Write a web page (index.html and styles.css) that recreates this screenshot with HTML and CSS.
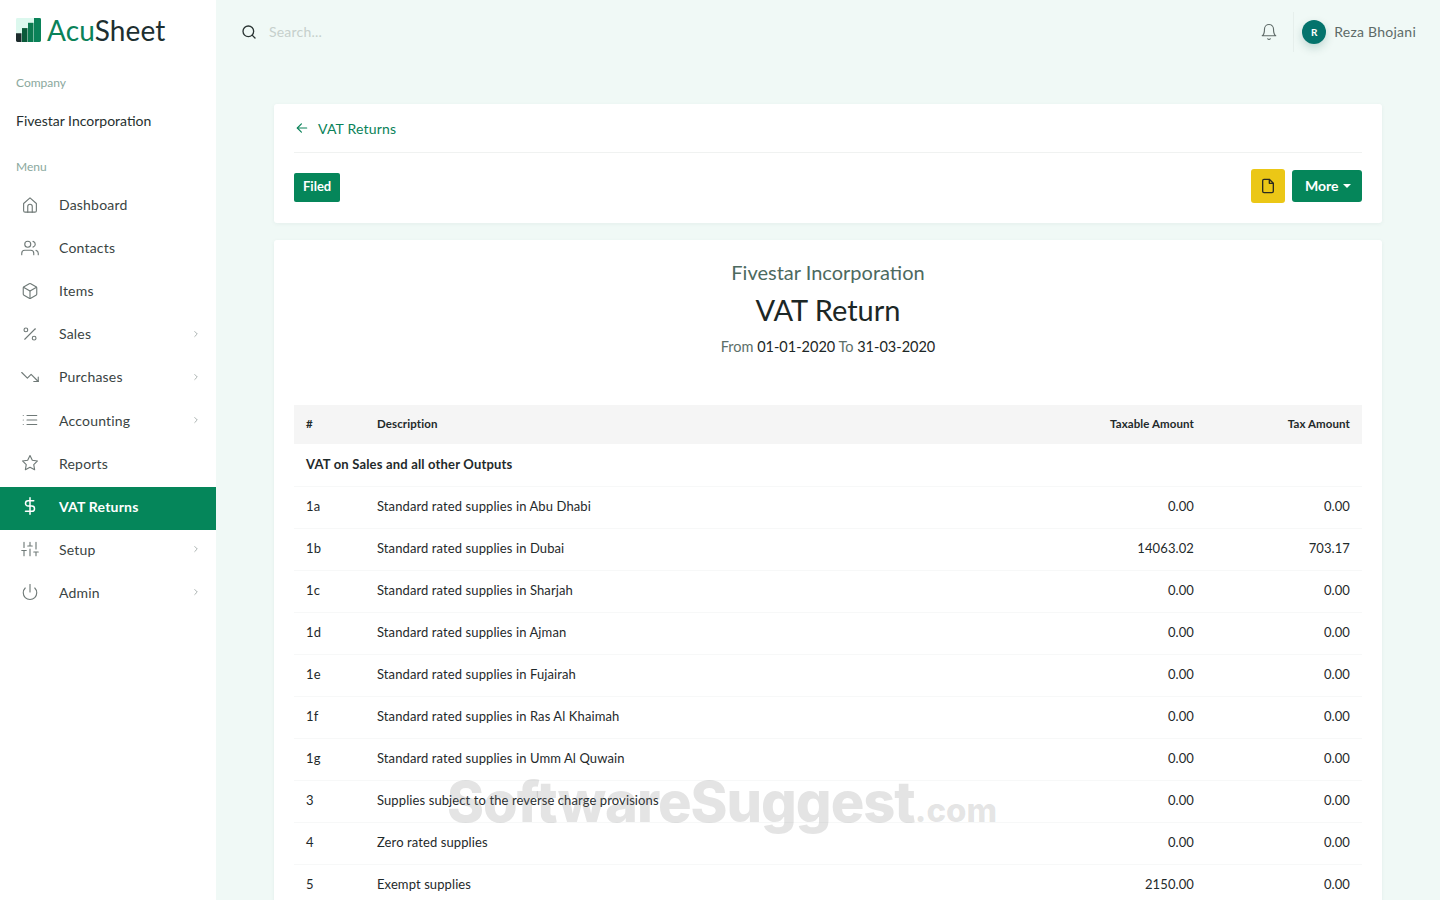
FILE: index.html
```html
<!DOCTYPE html>
<html lang="en">
<head>
    <meta charset="UTF-8">
    <meta name="viewport" content="width=device-width, initial-scale=1.0">
    <title>VAT Return</title>
    <link rel="stylesheet" href="styles.css">
</head>
<body>
    <aside class="sidebar">
        <div class="logo">
            <svg width="25" height="24" viewBox="0 0 25 25" preserveAspectRatio="none">
                <rect width="25" height="25" rx="1.5" fill="#dcf8ee"/>
                <path d="M0 16h5.500v9H1.500A1.500 1.500 0 0 1 0 23.500z" fill="#1d2b2c"/>
                <rect x="6" y="10.500" width="5.500" height="14.500" fill="#0a5a3a"/>
                <rect x="12" y="5" width="5.500" height="20" fill="#0b7a50"/>
                <path d="M18 0h5.500A1.500 1.500 0 0 1 25 1.500v22a1.500 1.500 0 0 1-1.500 1.500H18z" fill="#0a8259"/>
            </svg>
            <span class="logo-text"><span class="logo-acu">Acu</span>Sheet</span>
        </div>
        <div class="side-label">Company</div>
        <div class="company">Fivestar Incorporation</div>
        <div class="side-label side-label-menu">Menu</div>
        <nav class="menu">
            <a class="menu-item">
                <svg class="menu-icon" viewBox="0 0 24 24"><path d="M3.500 10L12 2.500l8.500 7.500v9.500a2 2 0 0 1-2 2h-13a2 2 0 0 1-2-2z"/><path d="M9 21.500V14a3 3 0 0 1 6 0v7.500"/></svg>
                <span class="menu-name">Dashboard</span>
            </a>
            <a class="menu-item">
                <svg class="menu-icon" viewBox="0 0 24 24"><path d="M17 21v-2a4 4 0 0 0-4-4H5a4 4 0 0 0-4 4v2"/><circle cx="9" cy="7" r="4"/><path d="M23 21v-2a4 4 0 0 0-3-3.870"/><path d="M16 3.130a4 4 0 0 1 0 7.750"/></svg>
                <span class="menu-name">Contacts</span>
            </a>
            <a class="menu-item">
                <svg class="menu-icon" viewBox="0 0 24 24"><path d="M21 16V8a2 2 0 0 0-1-1.730l-7-4a2 2 0 0 0-2 0l-7 4A2 2 0 0 0 3 8v8a2 2 0 0 0 1 1.730l7 4a2 2 0 0 0 2 0l7-4A2 2 0 0 0 21 16z"/><path d="M3.270 6.960L12 12.010l8.730-5.050"/><path d="M12 22.080V12"/></svg>
                <span class="menu-name">Items</span>
            </a>
            <a class="menu-item">
                <svg class="menu-icon" viewBox="0 0 24 24"><path d="M19 5L5 19"/><circle cx="6.500" cy="6.500" r="2.500"/><circle cx="17.500" cy="17.500" r="2.500"/></svg>
                <span class="menu-name">Sales</span>
                <svg class="chevron" viewBox="0 0 24 24"><path d="M9 18l6-6-6-6"/></svg>
            </a>
            <a class="menu-item">
                <svg class="menu-icon" viewBox="0 0 24 24"><path d="M23 18l-9.500-9.500-5 5L1 6"/><path d="M17 18h6v-6"/></svg>
                <span class="menu-name">Purchases</span>
                <svg class="chevron" viewBox="0 0 24 24"><path d="M9 18l6-6-6-6"/></svg>
            </a>
            <a class="menu-item">
                <svg class="menu-icon" viewBox="0 0 24 24"><path d="M8 6h13M8 12h13M8 18h13M3 6h.010M3 12h.010M3 18h.010"/></svg>
                <span class="menu-name">Accounting</span>
                <svg class="chevron" viewBox="0 0 24 24"><path d="M9 18l6-6-6-6"/></svg>
            </a>
            <a class="menu-item">
                <svg class="menu-icon" viewBox="0 0 24 24"><path d="M12 2l3.090 6.260L22 9.270l-5 4.870 1.180 6.880L12 17.770l-6.180 3.250L7 14.140 2 9.270l6.910-1.010z"/></svg>
                <span class="menu-name">Reports</span>
            </a>
            <a class="menu-item active">
                <svg class="menu-icon" viewBox="0 0 24 24"><path d="M12 1v22"/><path d="M17 5H9.500a3.500 3.500 0 0 0 0 7h5a3.500 3.500 0 0 1 0 7H6"/></svg>
                <span class="menu-name">VAT Returns</span>
            </a>
            <a class="menu-item">
                <svg class="menu-icon" viewBox="0 0 24 24"><path d="M4 21v-7M4 10V3M12 21v-9M12 8V3M20 21v-5M20 12V3M1 14h6M9 8h6M17 16h6"/></svg>
                <span class="menu-name">Setup</span>
                <svg class="chevron" viewBox="0 0 24 24"><path d="M9 18l6-6-6-6"/></svg>
            </a>
            <a class="menu-item">
                <svg class="menu-icon" viewBox="0 0 24 24"><path d="M18.360 6.640a9 9 0 1 1-12.730 0"/><path d="M12 2v10"/></svg>
                <span class="menu-name">Admin</span>
                <svg class="chevron" viewBox="0 0 24 24"><path d="M9 18l6-6-6-6"/></svg>
            </a>
        </nav>
    </aside>

    <div class="main">
        <header class="topbar">
            <svg class="search-icon" viewBox="0 0 24 24"><circle cx="11" cy="11" r="8"/><path d="M21 21l-4.350-4.350"/></svg>
            <span class="search-text">Search...</span>
            <svg class="bell" viewBox="0 0 24 24"><path d="M18 8a6 6 0 0 0-12 0c0 7-3 9-3 9h18s-3-2-3-9"/><path d="M13.730 21a2 2 0 0 1-3.460 0"/></svg>
            <div class="user">
                <span class="avatar">R</span>
                <span class="user-name">Reza Bhojani</span>
            </div>
        </header>

        <section class="card head-card">
            <div class="back">
                <svg class="back-icon" viewBox="0 0 24 24"><path d="M20 12H4"/><path d="M11 19l-7-7 7-7"/></svg>
                <span>VAT Returns</span>
            </div>
            <div class="actions">
                <span class="badge">Filed</span>
                <span class="btn-file">
                    <svg viewBox="0 0 24 24"><path d="M14 2H6a2 2 0 0 0-2 2v16a2 2 0 0 0 2 2h12a2 2 0 0 0 2-2V8z"/><path d="M14 2v6h6"/></svg>
                </span>
                <span class="btn-more">More<i class="caret"></i></span>
            </div>
        </section>

        <section class="card report">
            <div class="report-company">Fivestar Incorporation</div>
            <h1 class="report-title">VAT Return</h1>
            <div class="report-dates"><span>From</span> 01-01-2020 <span>To</span> 31-03-2020</div>
            <table class="vat-table">
                <thead>
                    <tr><th class="col-id">#</th><th>Description</th><th class="num">Taxable Amount</th><th class="num col-tax">Tax Amount</th></tr>
                </thead>
                <tbody>
                    <tr class="section-row"><td colspan="4">VAT on Sales and all other Outputs</td></tr>
                    <tr><td>1a</td><td>Standard rated supplies in Abu Dhabi</td><td class="num">0.00</td><td class="num">0.00</td></tr>
                    <tr><td>1b</td><td>Standard rated supplies in Dubai</td><td class="num">14063.02</td><td class="num">703.17</td></tr>
                    <tr><td>1c</td><td>Standard rated supplies in Sharjah</td><td class="num">0.00</td><td class="num">0.00</td></tr>
                    <tr><td>1d</td><td>Standard rated supplies in Ajman</td><td class="num">0.00</td><td class="num">0.00</td></tr>
                    <tr><td>1e</td><td>Standard rated supplies in Fujairah</td><td class="num">0.00</td><td class="num">0.00</td></tr>
                    <tr><td>1f</td><td>Standard rated supplies in Ras Al Khaimah</td><td class="num">0.00</td><td class="num">0.00</td></tr>
                    <tr><td>1g</td><td>Standard rated supplies in Umm Al Quwain</td><td class="num">0.00</td><td class="num">0.00</td></tr>
                    <tr><td>3</td><td>Supplies subject to the reverse charge provisions</td><td class="num">0.00</td><td class="num">0.00</td></tr>
                    <tr><td>4</td><td>Zero rated supplies</td><td class="num">0.00</td><td class="num">0.00</td></tr>
                    <tr><td>5</td><td>Exempt supplies</td><td class="num">2150.00</td><td class="num">0.00</td></tr>
                </tbody>
            </table>
        </section>
    </div>

    <div class="watermark">SoftwareSuggest<span class="watermark-com">.com</span></div>
</body>
</html>
```

FILE: styles.css
```css
html, body {
    height: 100%;
}

body {
    margin: 0;
    height: 900px;
    overflow: hidden;
    display: flex;
    background-color: #f0f9f6;
    color: #1f2a2b;
    font-family: Lato, "Open Sans", sans-serif;
    font-size: 14px;
}

/* sidebar */
.sidebar {
    width: 216px;
    flex-shrink: 0;
    background-color: #fff;
}

.logo {
    display: flex;
    align-items: center;
    gap: 6px;
    height: 24px;
    padding: 18px 0 0 16px;
}

.logo-text {
    font-size: 28px;
    letter-spacing: 0.1px;
    color: #1d2f30;
}

.logo-acu {
    color: #0a8259;
}

.side-label {
    margin: 33px 0 0 16px;
    font-size: 12px;
    line-height: 16px;
    color: #8aa89d;
}

.side-label-menu {
    margin-top: 28px;
}

.company {
    margin: 20px 0 0 16px;
    line-height: 20px;
    color: #26302f;
}

.menu {
    margin-top: 10px;
}

.menu-item {
    display: flex;
    align-items: center;
    box-sizing: border-box;
    height: 43.100px;
    padding: 0 16px 4px 21px;
    color: #3a4443;
    letter-spacing: 0.2px;
}

.menu-icon {
    width: 18px;
    height: 18px;
    fill: none;
    stroke: #6f7977;
    stroke-width: 1.500;
    stroke-linecap: round;
    stroke-linejoin: round;
}

.menu-name {
    flex: 1;
    margin-left: 20px;
}

.chevron {
    width: 10px;
    height: 12px;
    margin-right: -1px;
    fill: none;
    stroke: #9aa3a1;
    stroke-width: 2;
    stroke-linecap: round;
    stroke-linejoin: round;
}

.menu-item.active {
    background-color: #05865a;
    color: #fff;
    font-weight: 700;
}

.menu-item.active .menu-icon {
    stroke: #fff;
    stroke-width: 2;
}

/* top bar */
.main {
    flex: 1;
    padding: 0 58px;
    min-width: 0;
}

.topbar {
    display: flex;
    align-items: center;
    height: 64px;
    margin: 0 -34px 40px -33px;
}

.search-icon {
    width: 16px;
    height: 16px;
    fill: none;
    stroke: #2a3433;
    stroke-width: 2;
    stroke-linecap: round;
}

.search-text {
    flex: 1;
    margin-left: 12px;
    padding-bottom: 2px;
    letter-spacing: 0.2px;
    color: #c6d0cc;
}

.bell {
    width: 18px;
    height: 18px;
    fill: none;
    stroke: #5f6b68;
    stroke-width: 1.500;
    stroke-linecap: round;
    stroke-linejoin: round;
}

.user {
    display: flex;
    align-items: center;
    height: 40px;
    margin-left: 15px;
    padding-left: 8px;
    border-left: 1px solid #e6efec;
}

.avatar {
    display: flex;
    align-items: center;
    justify-content: center;
    width: 24px;
    height: 24px;
    border-radius: 50%;
    background-color: #04736c;
    color: #fff;
    font-size: 10px;
    font-weight: 700;
    box-shadow: 0 4px 10px rgba(4, 80, 70, 0.2);
}

.user-name {
    margin-left: 8px;
    padding-bottom: 2px;
    letter-spacing: 0.25px;
    color: #5d6b68;
}

/* cards */
.card {
    background-color: #fff;
    border-radius: 3px;
    box-shadow: 0 1px 4px rgba(40, 70, 60, 0.06);
    padding: 0 20px;
}

.head-card {
    height: 119px;
    margin-bottom: 17px;
    box-sizing: border-box;
}

.back {
    display: flex;
    align-items: center;
    gap: 9px;
    height: 48px;
    border-bottom: 1px solid #f0f2f1;
    letter-spacing: 0.2px;
    color: #0a8259;
}

.back-icon {
    width: 14px;
    height: 14px;
    margin-left: 1px;
    fill: none;
    stroke: #0a8259;
    stroke-width: 2;
    stroke-linecap: round;
    stroke-linejoin: round;
}

.actions {
    display: flex;
    align-items: center;
    padding-top: 16px;
}

.badge {
    display: flex;
    align-items: center;
    box-sizing: border-box;
    height: 29px;
    margin-right: auto;
    margin-top: 3px;
    padding: 0 9px 4px;
    border-radius: 2px;
    background-color: #05865a;
    color: #fff;
    font-size: 13px;
    font-weight: 700;
}

.btn-file {
    display: flex;
    align-items: center;
    justify-content: center;
    width: 34px;
    height: 34px;
    border-radius: 3px;
    background-color: #ebc716;
}

.btn-file svg {
    width: 16px;
    height: 16px;
    fill: none;
    stroke: #2b2b20;
    stroke-width: 2;
    stroke-linejoin: round;
}

.btn-more {
    display: flex;
    align-items: center;
    box-sizing: border-box;
    width: 70px;
    height: 32px;
    margin-left: 7px;
    padding: 0 0 1px 13px;
    border-radius: 3px;
    background-color: #05865a;
    color: #fff;
    font-weight: 700;
}

.caret {
    width: 0;
    height: 0;
    margin-left: 4px;
    border-top: 4px solid #fff;
    border-left: 4px solid transparent;
    border-right: 4px solid transparent;
}

/* report */
.report {
    padding-top: 19px;
    padding-bottom: 20px;
}

.report-company {
    text-align: center;
    font-size: 20px;
    line-height: 26px;
    color: #4d6a5f;
}

.report-title {
    margin: 6px 0 0;
    text-align: center;
    font-size: 29px;
    font-weight: 400;
    line-height: 38px;
    color: #1c2726;
}

.report-dates {
    margin-top: 8px;
    text-align: center;
    font-size: 14.500px;
    line-height: 20px;
    color: #1c2726;
}

.report-dates span {
    color: #5d6f69;
}

.vat-table {
    width: 100%;
    margin-top: 48px;
    border-collapse: collapse;
    color: #1f2a2b;
}

.vat-table th {
    box-sizing: border-box;
    height: 39px;
    padding: 0 12px 2px;
    background-color: #f5f5f5;
    text-align: left;
    font-size: 11.500px;
    font-weight: 700;
    letter-spacing: 0.1px;
}

.vat-table td {
    box-sizing: border-box;
    height: 42px;
    padding: 0 12px 2px;
    border-bottom: 1px solid #f7f8f8;
    font-size: 13px;
    letter-spacing: 0.1px;
}

.vat-table .num {
    text-align: right;
}

.col-id {
    width: 71px;
}

.vat-table .col-tax {
    width: 156px;
}

.vat-table .section-row td {
    font-weight: 700;
    letter-spacing: 0.18px;
}

/* sits over the page */
.watermark {
    position: absolute;
    left: 447px;
    top: 767px;
    font-family: Inter, Lato, sans-serif;
    font-size: 56px;
    font-weight: 800;
    line-height: 70px;
    letter-spacing: -1px;
    color: rgba(120, 120, 120, 0.2);
    white-space: nowrap;
}

.watermark-com {
    font-size: 33px;
    letter-spacing: 0;
}
```
